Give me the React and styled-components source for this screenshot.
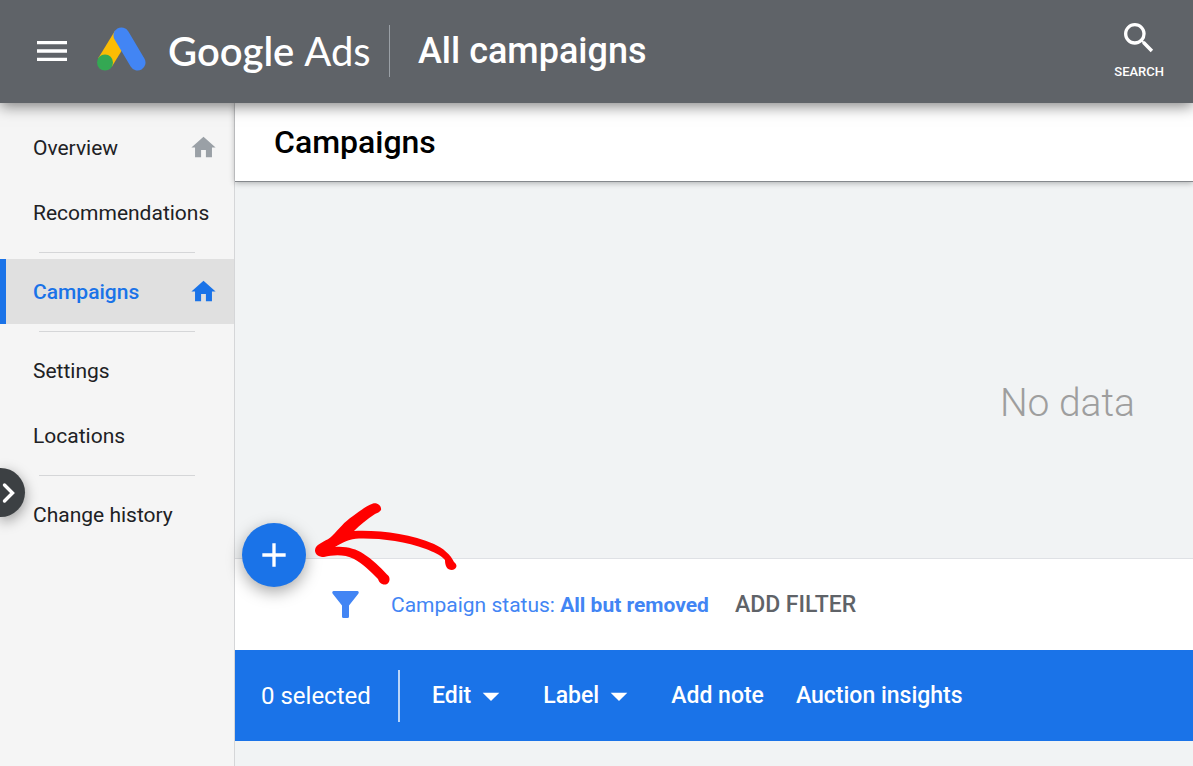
import * as React from 'react';
import styled, { createGlobalStyle } from 'styled-components';
import { MdAdd, MdArrowDropDown, MdHome, MdMenu, MdSearch } from 'react-icons/md';

const GlobalStyle = createGlobalStyle`
  * {
    box-sizing: border-box;
  }

  html, body, #root {
    height: 100%;
  }

  body {
    margin: 0;
    background: #f1f3f4;
    font-family: Roboto, "Liberation Sans", sans-serif;
  }

  button {
    margin: 0;
    padding: 0;
    border: none;
    background: none;
    font-family: inherit;
    color: inherit;
    cursor: pointer;
  }
`

const Page = styled.div`
  display: flex;
  flex-direction: column;
  min-height: 100%;
`

const Header = styled.header`
  position: relative;
  z-index: 2;
  display: flex;
  align-items: center;
  height: 103px;
  padding: 0 29px 1px 32px;
  background: #5f6368;
  color: white;
  box-shadow: 0 3px 14px rgba(0, 0, 0, 0.5);
`

const MenuButton = styled.button`
  display: flex;
`

const Brand = styled.a`
  display: flex;
  align-items: center;
  gap: 22px;
  width: 294px;
  height: 52px;
  margin-left: 24px;
  border-right: 1px solid #9aa0a6;
  color: white;
  text-decoration: none;
  white-space: nowrap;
`

const BrandName = styled.span`
  font-family: Lato, sans-serif;
  font-size: 40px;
  line-height: 48px;
  font-weight: 600;
`

const BrandLight = styled.span`
  font-weight: 400;
`

const AccountTitle = styled.div`
  flex: 1;
  margin-left: 28px;
  font-size: 36px;
  line-height: 48px;
  font-weight: 500;
`

const SearchButton = styled.button`
  display: flex;
  flex-direction: column;
  align-items: center;
  gap: 4px;
  padding-bottom: 2px;
  font-size: 13px;
  line-height: 20px;
  font-weight: 500;
`

const Body = styled.div`
  display: flex;
  flex: 1;
`

const Sidebar = styled.nav`
  position: relative;
  flex: none;
  width: 235px;
  padding-top: 12px;
  background: #f5f5f5;
  border-right: 1px solid #d5d6d8;
`

const NavItem = styled.a`
  display: flex;
  align-items: center;
  justify-content: space-between;
  height: 65px;
  padding: 0 16px 0 27px;
  border-left: 6px solid ${(props) => (props.$active ? '#1a73e8' : 'transparent')};
  background: ${(props) => (props.$active ? '#e0e0e0' : 'transparent')};
  color: ${(props) => (props.$active ? '#1a73e8' : '#202124')};
  font-size: 21px;
  line-height: 28px;
  font-weight: ${(props) => (props.$active ? 500 : 400)};
  text-decoration: none;
  white-space: nowrap;

  svg {
    color: ${(props) => (props.$active ? '#1a73e8' : '#9aa0a6')};
  }
`

const NavDivider = styled.hr`
  height: 1px;
  margin: 7px 39px 6px;
  border: none;
  background: #d5d6d8;
`

const ExpandButton = styled.button`
  position: absolute;
  top: 365px;
  left: 0;
  display: flex;
  align-items: center;
  width: 25px;
  height: 49px;
  border-radius: 0 25px 25px 0;
  background: #3c4043;
  box-shadow: 0 4px 14px rgba(0, 0, 0, 0.4);
`

const Main = styled.main`
  flex: 1;
  min-width: 0;
`

const PageHeading = styled.h1`
  position: relative;
  margin: 0;
  padding: 19px 39px;
  background: white;
  border-bottom: 1px solid #85888c;
  box-shadow: 0 1px 6px rgba(0, 0, 0, 0.3);
  color: black;
  font-size: 32px;
  line-height: 40px;
  font-weight: 500;
`

const ChartPanel = styled.section`
  display: flex;
  justify-content: flex-end;
  min-height: 376px;
  padding: 197px 58px 0;
  color: #9e9e9e;
  font-size: 39px;
  line-height: 48px;
  font-weight: 300;
`

const FilterBar = styled.section`
  position: relative;
  display: flex;
  align-items: center;
  height: 92px;
  padding-left: 97px;
  background: white;
  border-top: 1px solid #dfe1e5;
`

const CreateButton = styled.button`
  position: absolute;
  top: -36px;
  left: 7px;
  display: flex;
  align-items: center;
  justify-content: center;
  width: 64px;
  height: 64px;
  border-radius: 50%;
  background: #1a73e8;
  color: white;
  box-shadow: 0 5px 16px rgba(0, 0, 0, 0.35);
`

const Pointer = styled.svg`
  position: absolute;
  top: -61px;
  left: 75px;
  pointer-events: none;
`

const FilterChip = styled.button`
  margin-left: 32px;
  color: #4285f4;
  font-size: 21px;
  line-height: 28px;

  b {
    font-weight: 700;
  }
`

const AddFilter = styled.button`
  margin-left: 26px;
  color: #5f6368;
  font-size: 23px;
  line-height: 28px;
  font-weight: 500;
`

const ActionBar = styled.section`
  display: flex;
  align-items: center;
  gap: 32px;
  height: 91px;
  padding-left: 26px;
  background: #1a73e8;
  color: white;
`

const Selected = styled.span`
  width: 139px;
  border-right: 2px solid #bad5f8;
  font-size: 24px;
  line-height: 52px;
`

const ActionButton = styled.button`
  display: flex;
  align-items: center;
  font-size: 23px;
  line-height: 28px;
  font-weight: 500;
`

function AdsLogo() {
  return (
    <svg width="50" height="48" viewBox="0 0 50 48" fill="none" aria-hidden="true">
      <path d="M25.5 8.5 9 35.5" stroke="#fbbc04" strokeWidth="16" />
      <path d="M25.5 8.5 41.5 35.5" stroke="#4285f4" strokeWidth="16" strokeLinecap="round" />
      <circle cx="9" cy="35.5" r="8" fill="#34a853" />
    </svg>
  )
}

const navGroups = [
  [{ label: 'Overview', home: true }, { label: 'Recommendations' }],
  [{ label: 'Campaigns', home: true, active: true }],
  [{ label: 'Settings' }, { label: 'Locations' }],
  [{ label: 'Change history' }],
]

const actions = [
  { label: 'Edit', menu: true },
  { label: 'Label', menu: true },
  { label: 'Add note' },
  { label: 'Auction insights' },
]

export default function App() {
  return (
    <Page>
      <GlobalStyle />
      <Header>
        <MenuButton aria-label="Main menu"><MdMenu size={40} /></MenuButton>
        <Brand href="#">
          <AdsLogo />
          <BrandName>Google <BrandLight>Ads</BrandLight></BrandName>
        </Brand>
        <AccountTitle>All campaigns</AccountTitle>
        <SearchButton>
          <MdSearch size={40} />
          SEARCH
        </SearchButton>
      </Header>
      <Body>
        <Sidebar>
          {navGroups.map((group, index) => (
            <React.Fragment key={group[0].label}>
              {index > 0 ? <NavDivider /> : null}
              {group.map((item) => (
                <NavItem key={item.label} href="#" $active={item.active}>
                  {item.label}
                  {item.home ? <MdHome size={29} /> : null}
                </NavItem>
              ))}
            </React.Fragment>
          ))}
          <ExpandButton aria-label="Expand navigation">
            <svg width="18" height="24" viewBox="0 0 18 24" fill="none" stroke="white" strokeWidth="3.4" strokeLinecap="round">
              <path d="M4.500 4 12.500 12 4.500 20" />
            </svg>
          </ExpandButton>
        </Sidebar>
        <Main>
          <PageHeading>Campaigns</PageHeading>
          <ChartPanel>No data</ChartPanel>
          <FilterBar>
            <svg width="27" height="27" viewBox="0 0 27 27" fill="#4285f4" aria-hidden="true">
              <path d="M1.5 0H25.5Q27.5 .8 26.3 2.8L17 14.5V25.5Q17 27 15.5 27H11.5Q10 27 10 25.5V14.5L.7 2.8Q-.5 .8 1.5 0Z" />
            </svg>
            <FilterChip>Campaign status: <b>All but removed</b></FilterChip>
            <AddFilter>ADD FILTER</AddFilter>
            <CreateButton aria-label="New campaign"><MdAdd size={40} /></CreateButton>
            {/* hand-drawn arrow towards the create button */}
            <Pointer width="150" height="92" viewBox="0 0 150 92" fill="red" aria-hidden="true">
              <path d="M63 5.500C67 4 72 8 71 12C70 14 67 15 65 16C57 21 50 27 44 33C71 32 100 36 124 46C133 50 141 57 144 64C148 67 147 71 142 72C137 72 135 68 135 62C130 56 123 54 116 51C95 43 70 40 49 40.500C40 41 33 44 25 49C36 48 46 51 53 55.500C62 61 70 69 77 76.500C81 79 80 85 76 86.500C71 87 69 84 68 81C60 73 52 65 44 61C34 56 23 57 14 59C7 59 3 54 6 49C10 44 17 43 22 38C29 31 34 24 43 18C50 13 56 8 63 5.500Z" />
            </Pointer>
          </FilterBar>
          <ActionBar>
            <Selected>0 selected</Selected>
            {actions.map((action) => (
              <ActionButton key={action.label} aria-haspopup={action.menu ? 'menu' : undefined}>
                {action.label}
                {action.menu ? <MdArrowDropDown size={40} /> : null}
              </ActionButton>
            ))}
          </ActionBar>
        </Main>
      </Body>
    </Page>
  );
}
